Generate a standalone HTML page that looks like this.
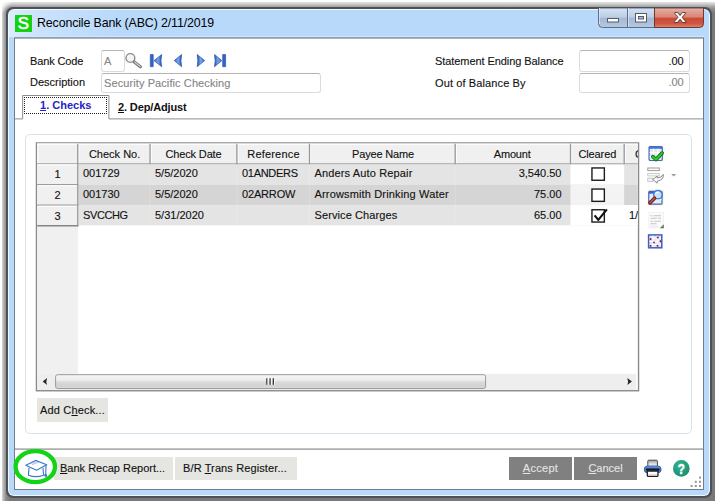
<!DOCTYPE html>
<html>
<head>
<meta charset="utf-8">
<title>Reconcile Bank</title>
<style>
html,body{margin:0;padding:0;background:#fff;}
body{width:718px;height:504px;position:relative;overflow:hidden;font-family:"Liberation Sans",sans-serif;font-size:11px;color:#111;-webkit-text-stroke:0.12px;}
.abs{position:absolute;}
#shadow{left:2px;top:2px;width:713px;height:499px;}
#win{left:6px;top:7px;width:706px;height:491px;border-radius:7px;background:#4d5258;}
#hl{left:8px;top:9px;width:702px;height:487px;border-radius:6px;background:#eef8ff;}
#frame{left:9px;top:10px;width:700px;height:485px;border-radius:5px;background:#b9d9fb;}
#inner{left:14px;top:37px;width:690px;height:453px;background:#6e7d8f;}
#client{left:15px;top:38px;width:688px;height:451px;background:#fff;}
.t{position:absolute;white-space:nowrap;line-height:14px;}
.lbl{font-size:11px;color:#111;}
.inp{position:absolute;border:1px solid #d9dcdf;border-top-color:#b4b4b4;border-radius:3px;background:#fff;box-sizing:border-box;}
.btn{position:absolute;background:#e5e5e1;box-sizing:border-box;font-size:11px;line-height:23px;white-space:nowrap;color:#111;}
.dbtn{position:absolute;background:#808080;color:#e4e4e4;box-sizing:border-box;font-size:11px;line-height:23px;text-align:center;}
u{text-decoration:underline;}
.hc{position:absolute;top:0;height:20px;box-sizing:border-box;text-align:center;line-height:22px;font-size:11px;white-space:nowrap;}
.rh{position:absolute;left:0;width:41px;height:21px;box-sizing:border-box;text-align:center;line-height:22px;font-size:11px;}
.row{position:absolute;left:41px;width:561px;height:21px;}
.c{position:absolute;top:0;height:21px;line-height:20px;font-size:11px;white-space:nowrap;}
/*LS*/#addcheck{letter-spacing:0.172px}#b2{letter-spacing:0.117px}#c10{letter-spacing:0.154px}#c13{letter-spacing:-0.378px}#c15{letter-spacing:0.096px}#c3{letter-spacing:-0.296px}#c4{letter-spacing:0.143px}#c9{letter-spacing:-0.165px}#h2{letter-spacing:-0.150px}#h3{letter-spacing:0.191px}#h4{letter-spacing:-0.180px}#h5{letter-spacing:-0.180px}#h6{letter-spacing:-0.120px}#i2t{letter-spacing:0.094px}#l1{letter-spacing:-0.146px}#l3{letter-spacing:-0.074px}#l4{letter-spacing:0.118px}#tab2t{letter-spacing:-0.128px}/*ENDLS*/
</style>
</head>
<body>
<div class="abs" id="shadow">
<div class="abs" style="left:0;top:0;width:712.800px;height:498.800px;background:#787878;"></div>
<div class="abs" style="left:0;top:0;width:713px;height:12px;background:linear-gradient(to bottom,rgba(255,255,255,0.800),rgba(255,255,255,0.620) 2px,rgba(255,255,255,0.400) 4px,rgba(255,255,255,0.200) 6px,rgba(255,255,255,0) 11px);"></div>
<div class="abs" style="left:0;top:0;width:10px;height:499px;background:linear-gradient(to right,rgba(255,255,255,0.700),rgba(255,255,255,0.400) 2px,rgba(255,255,255,0.150) 4px,rgba(255,255,255,0) 8px);"></div>
<div class="abs" style="left:0;top:0;width:12px;height:12px;background:linear-gradient(135deg,rgba(255,255,255,0.850) 0,rgba(255,255,255,0.600) 22%,rgba(255,255,255,0.350) 36%,rgba(255,255,255,0) 50%);"></div>
</div>
<div class="abs" id="win"></div>
<div class="abs" id="hl"></div>
<div class="abs" id="frame"></div>
<div class="abs" id="glow" style="left:9px;top:10px;width:120px;height:27px;border-radius:5px 0 0 0;background:linear-gradient(to right,rgba(255,255,255,0.500),rgba(255,255,255,0.250) 30px,rgba(255,255,255,0) 110px);"></div>
<div class="abs" id="inner"></div>
<div class="abs" id="client"></div>
<div class="abs" style="left:14px;top:37px;width:690px;height:1px;background:#8e9fb6;"></div>
<div class="abs" style="left:15px;top:38px;width:688px;height:1px;background:#aab3be;"></div>
<div class="abs" style="left:14px;top:36px;width:690px;height:1px;background:#cfe6fd;"></div>

<!-- title bar -->
<div class="abs" id="appicon" style="left:15px;top:15px;width:17px;height:17px;background:#12d212;"></div>
<div class="t" id="appS" style="-webkit-text-stroke:0.550px #fff;left:18.100px;top:13.500px;font-size:15.800px;font-weight:normal;color:#fff;line-height:19px;transform:scaleX(1.06);transform-origin:50% 50%;">S</div>
<div class="t" id="title" style="-webkit-text-stroke:0;left:37px;top:15px;font-size:12.4px;line-height:16px;color:#000;letter-spacing:-0.13px;">Reconcile Bank (ABC) 2/11/2019</div>

<!-- caption buttons -->
<svg class="abs" id="capbtns" style="left:598px;top:8px;" width="106" height="21" viewBox="0 0 106 21">
  <defs>
    <linearGradient id="gb" x1="0" y1="0" x2="0" y2="1">
      <stop offset="0" stop-color="#d4e2f2"/><stop offset="0.48" stop-color="#bccde3"/><stop offset="0.5" stop-color="#a3b8d4"/><stop offset="1" stop-color="#b5c9e2"/>
    </linearGradient>
    <linearGradient id="gr" x1="0" y1="0" x2="0" y2="1">
      <stop offset="0" stop-color="#ecc0b6"/><stop offset="0.12" stop-color="#e3a397"/><stop offset="0.48" stop-color="#d98474"/><stop offset="0.5" stop-color="#cb4a33"/><stop offset="0.8" stop-color="#cf5540"/><stop offset="1" stop-color="#dc8674"/>
    </linearGradient>
  </defs>
  <path d="M0.5 0 V15.500 Q0.5 19.500 4.500 19.500 H57 V0 Z" fill="url(#gb)" stroke="#5f6e82"/>
  <path d="M56.5 0 V19.500 H101.500 Q105.500 19.500 105.500 15.500 V0 Z" fill="url(#gr)" stroke="#6b3a35"/>
  <line x1="29.5" y1="0" x2="29.5" y2="19" stroke="#5f6e82"/>
  <line x1="30.5" y1="0" x2="30.5" y2="19" stroke="#dfe9f5" stroke-opacity="0.7"/>
  <line x1="1.5" y1="0" x2="1.5" y2="16" stroke="#dfe9f5" stroke-opacity="0.7"/>
  <rect x="9.5" y="10.5" width="11" height="3.5" fill="#fff" stroke="#545b6b"/>
  <rect x="37.5" y="5.500" width="11" height="8.5" fill="#fff" stroke="#545b6b"/>
  <rect x="40.500" y="8.500" width="5" height="2.500" fill="#aebfd8" stroke="#545b6b"/>
  <text transform="translate(82,14.3) scale(1.38,1)" x="0" y="0" font-family="Liberation Sans, sans-serif" font-weight="bold" font-size="12" text-anchor="middle" fill="#fff" stroke="#4f3434" stroke-width="1.300" paint-order="stroke" stroke-linejoin="round">X</text>
</svg>

<!-- top fields -->
<div class="t lbl" id="l1" style="left:30px;top:54px;">Bank Code</div>
<div class="t lbl" id="l2" style="left:30px;top:75px;">Description</div>
<div class="inp" id="i1" style="left:101px;top:50px;width:24px;height:22px;"></div>
<div class="t lbl" id="i1t" style="left:104px;top:54px;color:#858585;">A</div>
<div class="inp" id="i2" style="left:101px;top:73px;width:220px;height:20px;"></div>
<div class="t lbl" id="i2t" style="left:104px;top:76px;color:#858585;">Security Pacific Checking</div>

<svg class="abs" id="mag" style="left:124px;top:51px;" width="20" height="20" viewBox="0 0 20 20">
  <circle cx="6.400" cy="7" r="4.400" fill="#f4f4f4" stroke="#8a8a8a" stroke-width="1.400"/>
  <path d="M3.800 6.200 A2.800 2.800 0 0 1 6.800 4.200" fill="none" stroke="#fff" stroke-width="1"/>
  <line x1="10.300" y1="10.900" x2="16.400" y2="15.700" stroke="#7c7c7c" stroke-width="3.200" stroke-linecap="round"/>
  <line x1="10.800" y1="11.200" x2="16.200" y2="15.400" stroke="#d2d2d2" stroke-width="1.100" stroke-linecap="round"/>
</svg>
<svg class="abs" id="nav" style="left:148px;top:53px;" width="82" height="16" viewBox="0 0 82 16">
  <defs>
    <linearGradient id="nl" x1="1" y1="0" x2="0" y2="0"><stop offset="0" stop-color="#1f4cae"/><stop offset="0.45" stop-color="#78a4ec"/><stop offset="1" stop-color="#3a6ccc"/></linearGradient>
    <linearGradient id="nr" x1="0" y1="0" x2="1" y2="0"><stop offset="0" stop-color="#1f4cae"/><stop offset="0.45" stop-color="#78a4ec"/><stop offset="1" stop-color="#3a6ccc"/></linearGradient>
  </defs>
  <g stroke="#2c56ad" stroke-width="0.700" stroke-linejoin="round">
    <rect x="2.300" y="1.500" width="2.900" height="12.200" fill="#3264c8"/>
    <path d="M13.700 1.500 L6 7.600 L13.700 13.700 Q12.300 7.600 13.700 1.500 Z" fill="url(#nl)"/>
    <path d="M33.600 1.500 L26.200 7.600 L33.600 13.700 Q32.400 7.600 33.600 1.500 Z" fill="url(#nl)"/>
    <path d="M49.200 1.500 L56.700 7.600 L49.200 13.700 Q50.400 7.600 49.200 1.500 Z" fill="url(#nr)"/>
    <path d="M66.500 1.500 L73.900 7.600 L66.500 13.700 Q67.800 7.600 66.500 1.500 Z" fill="url(#nr)"/>
    <rect x="74.700" y="1.500" width="2.900" height="12.200" fill="#3264c8"/>
  </g>
</svg>

<div class="t lbl" id="l3" style="left:435px;top:54px;">Statement Ending Balance</div>
<div class="t lbl" id="l4" style="left:435px;top:76px;">Out of Balance By</div>
<div class="inp" id="i3" style="left:579px;top:50px;width:111px;height:22px;"></div>
<div class="t lbl" id="i3t" style="right:34.300px;top:54px;">.00</div>
<div class="inp" id="i4" style="left:579px;top:73px;width:111px;height:20px;"></div>
<div class="t lbl" id="i4t" style="right:34.300px;top:75px;color:#858585;">.00</div>

<!-- tabs -->
<svg class="abs" id="tabsvg" style="left:14px;top:90px;" width="692" height="34" viewBox="14 90 692 34"><path d="M15 118.900 H22.650 V95.500 H108.900 V118.900 H703.300" fill="none" stroke="#8c8c8c" stroke-width="1"/></svg>
<div class="abs" id="tabfocus" style="left:24px;top:97px;width:83px;height:17px;border:1px dotted #222;box-sizing:border-box;"></div>
<div class="t" id="tab1t" style="-webkit-text-stroke:0;left:40px;top:98px;font-size:11px;font-weight:bold;color:#2424c8;"><u>1</u>. Checks</div>
<div class="t" id="tab2t" style="-webkit-text-stroke:0;left:118px;top:100px;font-size:11px;font-weight:bold;color:#111;"><u>2</u>. Dep/Adjust</div>

<!-- group box -->
<div class="abs" id="group" style="left:25px;top:134px;width:667px;height:300px;border:1px solid #d8e2ea;border-radius:5px;box-sizing:border-box;"></div>

<!-- grid -->
<svg class="abs" id="gridsvg" style="left:30px;top:138px;" width="620" height="260" viewBox="30 138 620 260">
<rect x="36.450" y="142.950" width="602.100" height="247.800" fill="#fff" stroke="#8a8a8a" stroke-width="1.400"/>
<rect x="37.150" y="143.650" width="40.700" height="230.200" fill="#f0f0f0"/>
<rect x="37.150" y="143.650" width="600.600" height="19.800" fill="#f0f0f0"/>
<rect x="78.400" y="164.300" width="559.350" height="20.350" fill="#e4e4e4"/>
<rect x="78.400" y="184.650" width="559.350" height="20.450" fill="#d5d5d5"/>
<rect x="78.400" y="205.100" width="559.350" height="20.200" fill="#e4e4e4"/>
<rect x="570.600" y="164.300" width="53.400" height="20.350" fill="#fff"/>
<rect x="570.600" y="184.650" width="53.400" height="20.450" fill="#f3f3f3"/>
<rect x="570.600" y="205.100" width="67.150" height="20.200" fill="#fff"/>
<line x1="150.050" y1="164.300" x2="150.050" y2="225.300" stroke="#fff" stroke-opacity="0.18" stroke-width="1"/>
<line x1="236.900" y1="164.300" x2="236.900" y2="225.300" stroke="#fff" stroke-opacity="0.18" stroke-width="1"/>
<line x1="309.500" y1="164.300" x2="309.500" y2="225.300" stroke="#fff" stroke-opacity="0.18" stroke-width="1"/>
<line x1="455.200" y1="164.300" x2="455.200" y2="225.300" stroke="#fff" stroke-opacity="0.18" stroke-width="1"/>
<line x1="570.500" y1="164.300" x2="570.500" y2="225.300" stroke="#fff" stroke-opacity="0.18" stroke-width="1"/>
<line x1="624.200" y1="164.300" x2="624.200" y2="225.300" stroke="#fff" stroke-opacity="0.18" stroke-width="1"/>
<line x1="37.150" y1="144.200" x2="637.750" y2="144.200" stroke="#fff" stroke-width="1"/>
<line x1="37.750" y1="143.700" x2="37.750" y2="163.200" stroke="#fff" stroke-width="1"/>
<line x1="78.900" y1="143.700" x2="78.900" y2="163.200" stroke="#fff" stroke-width="1"/>
<line x1="151.200" y1="143.700" x2="151.200" y2="163.200" stroke="#fff" stroke-width="1"/>
<line x1="238.050" y1="143.700" x2="238.050" y2="163.200" stroke="#fff" stroke-width="1"/>
<line x1="310.650" y1="143.700" x2="310.650" y2="163.200" stroke="#fff" stroke-width="1"/>
<line x1="456.350" y1="143.700" x2="456.350" y2="163.200" stroke="#fff" stroke-width="1"/>
<line x1="571.650" y1="143.700" x2="571.650" y2="163.200" stroke="#fff" stroke-width="1"/>
<line x1="625.350" y1="143.700" x2="625.350" y2="163.200" stroke="#fff" stroke-width="1"/>
<line x1="77.750" y1="143.650" x2="77.750" y2="164.300" stroke="#989898" stroke-width="1.300"/>
<line x1="150.050" y1="143.650" x2="150.050" y2="164.300" stroke="#989898" stroke-width="1.300"/>
<line x1="236.900" y1="143.650" x2="236.900" y2="164.300" stroke="#989898" stroke-width="1.300"/>
<line x1="309.500" y1="143.650" x2="309.500" y2="164.300" stroke="#989898" stroke-width="1.300"/>
<line x1="455.200" y1="143.650" x2="455.200" y2="164.300" stroke="#989898" stroke-width="1.300"/>
<line x1="570.500" y1="143.650" x2="570.500" y2="164.300" stroke="#989898" stroke-width="1.300"/>
<line x1="624.200" y1="143.650" x2="624.200" y2="164.300" stroke="#989898" stroke-width="1.300"/>
<line x1="37.150" y1="163.750" x2="637.750" y2="163.750" stroke="#a2a2a2" stroke-width="1.150"/>
<line x1="77.750" y1="163.700" x2="77.750" y2="226.300" stroke="#989898" stroke-width="1.300"/>
<line x1="37.150" y1="184.600" x2="78.400" y2="184.600" stroke="#9c9c9c" stroke-width="1.200"/>
<line x1="37.800" y1="185.700" x2="77.100" y2="185.700" stroke="#fff" stroke-width="1"/>
<line x1="37.150" y1="205.100" x2="78.400" y2="205.100" stroke="#9c9c9c" stroke-width="1.200"/>
<line x1="37.800" y1="206.200" x2="77.100" y2="206.200" stroke="#fff" stroke-width="1"/>
<line x1="37.800" y1="164.850" x2="77.100" y2="164.850" stroke="#fff" stroke-width="1"/>
<line x1="37.150" y1="225.700" x2="78.400" y2="225.700" stroke="#868686" stroke-width="1.500"/>
<defs><linearGradient id="thg" x1="0" y1="0" x2="0" y2="1"><stop offset="0" stop-color="#f6f6f6"/><stop offset="0.45" stop-color="#ebebeb"/><stop offset="0.5" stop-color="#dbdbdb"/><stop offset="0.85" stop-color="#d2d2d2"/><stop offset="1" stop-color="#e2e2e2"/></linearGradient></defs>
<rect x="37.150" y="373.800" width="599" height="16.100" fill="#eeeeee"/>
<rect x="55.600" y="374.700" width="430" height="13.800" rx="2" ry="2" fill="url(#thg)" stroke="#9a9a9a" stroke-width="1"/>
<path d="M47.100 378 L42.700 381.500 L47.100 385 Q45.600 381.500 47.100 378 Z" fill="#222"/>
<path d="M627.300 378 L631.900 381.500 L627.300 385 Q628.800 381.500 627.300 378 Z" fill="#222"/>
<line x1="266.900" y1="378.200" x2="266.900" y2="384.800" stroke="#3a3a3a" stroke-width="1.400"/>
<line x1="268.100" y1="378.200" x2="268.100" y2="384.800" stroke="#fff" stroke-width="0.900"/>
<line x1="270.150" y1="378.200" x2="270.150" y2="384.800" stroke="#3a3a3a" stroke-width="1.400"/>
<line x1="271.350" y1="378.200" x2="271.350" y2="384.800" stroke="#fff" stroke-width="0.900"/>
<line x1="273.400" y1="378.200" x2="273.400" y2="384.800" stroke="#3a3a3a" stroke-width="1.400"/>
<line x1="274.600" y1="378.200" x2="274.600" y2="384.800" stroke="#fff" stroke-width="0.900"/>
<rect x="591.950" y="167.950" width="12.400" height="12.300" fill="#fff" stroke="#1c1c1c" stroke-width="1.400"/>
<rect x="591.950" y="189.050" width="12.400" height="12.300" fill="#fff" stroke="#1c1c1c" stroke-width="1.400"/>
<rect x="591.950" y="209.750" width="12.400" height="12.300" fill="#fff" stroke="#1c1c1c" stroke-width="1.400"/>
<path d="M594.600 215.300 L598.300 219.800 L606.900 209.400" fill="none" stroke="#111" stroke-width="2.100"/>
</svg>
<div class="abs" id="grid" style="left:37px;top:143px;width:601px;height:247px;overflow:hidden;">
  <div class="hc" id="h1" style="left:41px;width:72px;padding-left:1.200px;">Check No.</div>
  <div class="hc" id="h2" style="left:113px;width:87px;">Check Date</div>
  <div class="hc" id="h3" style="left:200px;width:73px;">Reference</div>
  <div class="hc" id="h4" style="left:273px;width:146px;">Payee Name</div>
  <div class="hc" id="h5" style="left:419px;width:115px;padding-right:2.600px;">Amount</div>
  <div class="hc" id="h6" style="left:534px;width:54px;padding-right:1.400px;">Cleared</div>
  <div class="hc" id="h7" style="left:588px;width:80px;text-align:left;padding-left:10px;">Clear Date</div>
  <div class="rh" id="n1" style="top:20px;">1</div>
  <div class="rh" id="n2" style="top:41px;">2</div>
  <div class="rh" id="n3" style="top:62px;">3</div>
  <div class="row" id="r1" style="top:20px;">
    <div class="c" id="c1" style="left:5px;">001729</div>
    <div class="c" id="c2" style="left:77px;">5/5/2020</div>
    <div class="c" id="c3" style="left:164px;">01ANDERS</div>
    <div class="c" id="c4" style="left:236.500px;">Anders Auto Repair</div>
    <div class="c" id="c5" style="left:378px;width:105.500px;text-align:right;">3,540.50</div>
  </div>
  <div class="row" id="r2" style="top:41px;">
    <div class="c" id="c7" style="left:5px;">001730</div>
    <div class="c" id="c8" style="left:77px;">5/5/2020</div>
    <div class="c" id="c9" style="left:164px;">02ARROW</div>
    <div class="c" id="c10" style="left:236.500px;">Arrowsmith Drinking Water</div>
    <div class="c" id="c11" style="left:378px;width:105.500px;text-align:right;">75.00</div>
  </div>
  <div class="row" id="r3" style="top:62px;">
    <div class="c" id="c13" style="left:5px;">SVCCHG</div>
    <div class="c" id="c14" style="left:77px;">5/31/2020</div>
    <div class="c" id="c15" style="left:236.500px;">Service Charges</div>
    <div class="c" id="c16" style="left:378px;width:105.500px;text-align:right;">65.00</div>
    <div class="c" id="c18" style="left:551px;">1/31/2020</div>
  </div>
</div>

<!-- side icons -->
<svg class="abs" id="side" style="left:646px;top:144px;" width="34" height="108" viewBox="0 0 34 108">
  <!-- 1 grid+check -->
  <rect x="2" y="1.500" width="15.400" height="16.200" fill="#fcf4dc"/>
  <rect x="3.100" y="2.500" width="13.200" height="14" rx="1.300" fill="#e3e7f9" stroke="#4169c9" stroke-width="1.200"/>
  <path d="M3.100 4.400 V3.800 Q3.100 2.500 4.400 2.500 H15 Q16.300 2.500 16.300 3.800 V4.400 Z" fill="#4a76d8" stroke="#4169c9" stroke-width="0.600"/>
  <path d="M3.700 8.600 H15.700 M3.700 12.600 H15.700 M7.500 4.800 V16 M11.900 4.800 V16" stroke="#fff" stroke-width="1.200"/>
  <path d="M6.900 12.700 L10 15.500 L16.100 9.100" fill="none" stroke="#0d6312" stroke-width="3.700" stroke-linecap="round" stroke-linejoin="round"/>
  <path d="M6.900 12.700 L10 15.500 L16.100 9.100" fill="none" stroke="#27d32a" stroke-width="2" stroke-linecap="round" stroke-linejoin="round"/>
  <!-- 2 rows + arrow -->
  <rect x="1.800" y="24" width="11.500" height="2.600" fill="#fdfdfd" stroke="#9c9c9c" stroke-width="1"/>
  <rect x="1.800" y="29.500" width="11.500" height="2.400" fill="#fdfdfd" stroke="#c6c6c6" stroke-width="0.900"/>
  <rect x="1.800" y="34.300" width="5" height="3" fill="#fdfdfd" stroke="#bdbdbd" stroke-width="0.900"/>
  <path d="M6.800 35.600 L11.200 32 L11.200 34 Q15.600 33.800 17.300 30.400 Q18 36 11.200 37.200 L11.200 39.200 Z" fill="#fafafa" stroke="#8a8a8a" stroke-width="1" stroke-linejoin="round"/>
  <path d="M25.200 29.900 H30.200 L27.700 32.600 Z" fill="#9c9c9c"/>
  <!-- 3 doc + magnifier -->
  <rect x="1.700" y="45.600" width="16" height="15.900" fill="#fbf1d2"/>
  <rect x="2.800" y="47.300" width="13.200" height="12.900" rx="1" fill="#e6ecfa" stroke="#3c66c6" stroke-width="1.200"/>
  <rect x="2.800" y="47.300" width="13.200" height="2.400" fill="#3c66c6"/>
  <path d="M3.500 55.500 H15.400" stroke="#fff" stroke-width="1"/>
  <circle cx="11.900" cy="50.700" r="4.200" fill="#c4e2ff" stroke="#3a7bdc" stroke-width="1.400"/>
  <path d="M9.800 49.600 A2.500 2.500 0 0 1 12.500 48.200" fill="none" stroke="#fff" stroke-width="1.100" stroke-linecap="round"/>
  <line x1="8.600" y1="54.200" x2="4" y2="58.800" stroke="#6e2018" stroke-width="3.600" stroke-linecap="round"/>
  <line x1="8.600" y1="54.200" x2="4" y2="58.800" stroke="#c4564a" stroke-width="1.600" stroke-linecap="round"/>
  <!-- 4 disabled doc -->
  <rect x="2.800" y="68.400" width="14.600" height="15.400" fill="#fbfbfb" stroke="#efefef" stroke-width="0.800"/>
  <path d="M4.500 71.800 H6.500 M7.500 71.800 H15 M4.500 74.300 H11 M12 74.300 H15 M4.500 77.300 H7 M8 77.300 H15 M4.500 79.800 H10.500" stroke="#c4c4c4" stroke-width="1.100"/>
  <path d="M4 82.300 H12" stroke="#e2e2e2" stroke-width="0.800"/>
  <path d="M17.800 80.200 V84.200 H13.800 Z" fill="#6e6e6e"/>
  <!-- 5 grid red dots -->
  <rect x="2.600" y="90.900" width="13.200" height="12.900" fill="#dfe3f8" stroke="#3c5fc2" stroke-width="1.500"/>
  <path d="M3.400 94.200 H15 M3.400 97.400 H15 M3.400 100.600 H15 M7 91.600 V103 M11.400 91.600 V103" stroke="#fff" stroke-width="1"/>
  <g fill="#8e1f24"><circle cx="4.600" cy="95" r="1"/><circle cx="11.800" cy="93.500" r="1"/><circle cx="4.600" cy="101.700" r="1"/><circle cx="11.500" cy="101.700" r="1"/><circle cx="14.500" cy="97.200" r="1"/><circle cx="8" cy="98.500" r="0.900"/></g>
</svg>

<!-- add check -->
<div class="btn" id="addcheck" style="left:37px;top:398px;width:71.400px;height:24px;padding-left:3px;line-height:25px;">Add C<u>h</u>eck...</div>

<!-- bottom -->
<div class="abs" id="sep" style="left:15px;top:448px;width:688px;height:2px;background:linear-gradient(#c4c4c4 50%,#aeaeae 50%);"></div>
<div class="btn" id="b1" style="left:54px;top:457px;width:119px;height:23px;padding-left:6px;"><u>B</u>ank Recap Report...</div>
<div class="btn" id="b2" style="left:175px;top:457px;width:122px;height:23px;padding-left:8px;">B/R <u>T</u>rans Register...</div>
<div class="dbtn" id="b3" style="left:509px;top:457px;width:63px;height:23px;letter-spacing:0.300px;"><u>A</u>ccept</div>
<div class="dbtn" id="b4" style="left:574px;top:457px;width:63px;height:23px;"><u>C</u>ancel</div>

<svg class="abs" id="capicon" style="left:12px;top:447px;" width="48" height="40" viewBox="0 0 48 40">
  <ellipse cx="23.300" cy="19.700" rx="19.700" ry="15.500" fill="none" stroke="#12d416" stroke-width="4.300"/>
  <g fill="none" stroke="#3f78ca" stroke-width="1.150" stroke-linejoin="round" stroke-linecap="round">
    <path d="M17 21.200 L16.400 28.200 Q24 31.200 31.600 28.200 L31 21.200"/>
    <path d="M13.800 18.200 L23.600 13.400 L34.700 17.800 L24.500 23.200 Z" fill="#fff"/>
    <path d="M18.500 16.600 L24 14.600 M20.500 17.400 L26 15.400" stroke-width="0.700" stroke="#7ea6e0"/>
    <path d="M34 18.400 L33.700 27.400"/>
    <circle cx="33.700" cy="28.400" r="0.900" fill="#3f78ca"/>
  </g>
</svg>

<svg class="abs" id="printer" style="left:643px;top:459px;" width="20" height="19" viewBox="0 0 20 19">
  <defs><linearGradient id="pg" x1="0" y1="0" x2="0" y2="1"><stop offset="0" stop-color="#9c9c9c"/><stop offset="0.5" stop-color="#dcdcdc"/><stop offset="1" stop-color="#ffffff"/></linearGradient>
  <linearGradient id="pb" x1="0" y1="0" x2="0" y2="1"><stop offset="0" stop-color="#7ea9e6"/><stop offset="0.4" stop-color="#3f74c8"/><stop offset="1" stop-color="#4a80d4"/></linearGradient></defs>
  <path d="M4.800 8 V2.200 Q4.800 1.200 5.800 1.200 H13.400 Q14.400 1.200 14.400 2.200 V8 Z" fill="url(#pg)" stroke="#4a4a4a" stroke-width="1"/>
  <path d="M1.400 10 Q1.400 7 4.400 7 H15 Q18 7 18 10 V11 Q18 13.600 15.600 13.600 H3.800 Q1.400 13.600 1.400 11 Z" fill="url(#pb)" stroke="#2f5cad" stroke-width="0.900"/>
  <rect x="3" y="9.600" width="13.400" height="2" rx="0.500" fill="#15181e"/>
  <path d="M4.300 12 H15 V16.200 Q15 17.400 13.800 17.400 H5.500 Q4.300 17.400 4.300 16.200 Z" fill="#fff" stroke="#1e1e1e" stroke-width="1.300"/>
  <path d="M5.500 15.300 H13.800" stroke="#cfcfcf" stroke-width="0.800"/>
</svg>
<svg class="abs" id="help" style="left:672px;top:459px;" width="19" height="19" viewBox="0 0 19 19">
  <defs><radialGradient id="hg" cx="0.400" cy="0.300" r="0.800"><stop offset="0" stop-color="#33b48e"/><stop offset="1" stop-color="#148a6c"/></radialGradient></defs>
  <circle cx="9.300" cy="9.400" r="8.300" fill="url(#hg)"/>
  <text transform="translate(9.400,14.500) scale(0.800,1)" x="0" y="0" font-family="Liberation Sans, sans-serif" font-weight="bold" font-size="14.500" text-anchor="middle" fill="#fff" stroke="#fff" stroke-width="0.500">?</text>
</svg>
<svg class="abs" id="grip" style="left:690px;top:476px;" width="12" height="12" viewBox="0 0 12 12">
  <g fill="#969696"><rect x="9" y="0.600" width="2" height="2"/><rect x="4.800" y="4.800" width="2" height="2"/><rect x="9" y="4.800" width="2" height="2"/><rect x="0.600" y="9" width="2" height="2"/><rect x="4.800" y="9" width="2" height="2"/><rect x="9" y="9" width="2" height="2"/></g>
</svg>
</body>
</html>
